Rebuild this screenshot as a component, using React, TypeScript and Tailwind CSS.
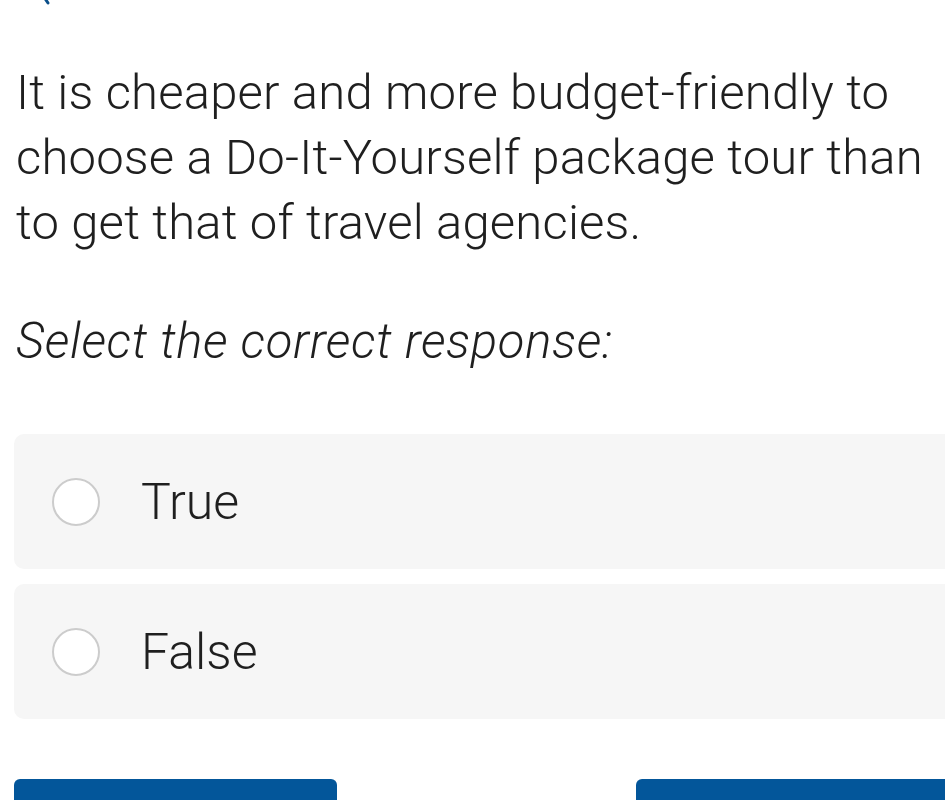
import React from "react";

function Option({ label }: { label: string }) {
  return (
    <div className="flex h-[135px] items-center rounded-l-[10px] bg-[#f6f6f6] pl-[38px]">
      <div className="h-[48px] w-[48px] shrink-0 rounded-full border-2 border-[#cccccc] bg-white" />
      <span className="ml-[41px] text-[50px] font-light leading-none text-[#1f1f1f]">{label}</span>
    </div>
  );
}

export default function App() {
  return (
    <div className="relative h-[800px] w-[945px] overflow-hidden bg-white font-['Roboto',sans-serif]">
      <svg className="absolute left-[30px] top-[-30px]" width="30" height="40" viewBox="0 0 30 40">
        <path d="M22 2 L8 18 L18 33" fill="none" stroke="#0b4f8a" strokeWidth="3" strokeLinecap="round" strokeLinejoin="round" />
      </svg>
      <div className="pl-[16px] pt-[60px]">
        <p className="text-[49px] font-light leading-[65px] tracking-[0.18px] text-[#1f1f1f]">
          It is cheaper and more budget-friendly to choose a Do-It-Yourself package tour than to get that of travel agencies.
        </p>
        <p className="mt-[54px] text-[49px] font-light italic leading-[65px] tracking-[0.65px] text-[#1f1f1f]">Select the correct response:</p>
      </div>
      <div className="mt-[60px] flex flex-col gap-[15px] pl-[14px]">
        <Option label="True" />
        <Option label="False" />
      </div>
      <div className="mt-[60px] flex justify-between pl-[14px]">
        <div className="h-[40px] w-[323px] rounded-t-[6px] bg-[#03569a]" />
        <div className="h-[40px] w-[309px] rounded-tl-[6px] bg-[#03569a]" />
      </div>
    </div>
  );
}
